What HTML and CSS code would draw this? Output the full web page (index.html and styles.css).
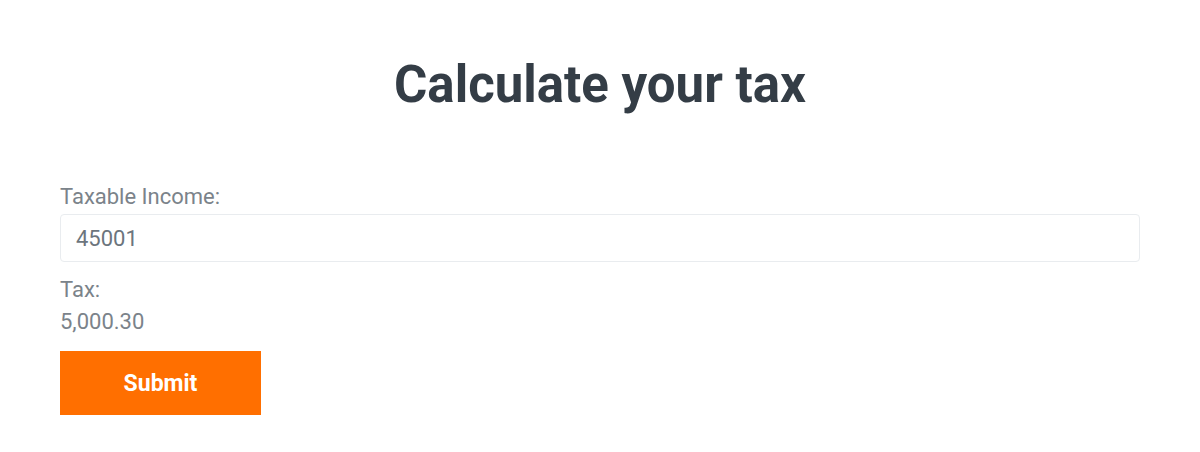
FILE: index.html
```html
<!DOCTYPE html>
<html lang="en">
<head>
    <meta charset="UTF-8" />
    <title>Calculate your tax</title>
    <link rel="stylesheet" href="styles.css">
</head>
<body>
    <main class="calculator">
        <h1 class="title">Calculate your tax</h1>
        <form class="tax-form">
            <label class="field-label" for="income">Taxable Income:</label>
            <input class="field-input" type="text" id="income" value="45001" />
            <div class="field-label">Tax:</div>
            <div class="result">5,000.30</div>
            <button class="submit" type="submit">Submit</button>
        </form>
    </main>
</body>
</html>
```

FILE: styles.css
```css
body {
    margin: 0;
    font-family: Roboto, "Liberation Sans", sans-serif;
    background: #fff;
    color: #6c757d;
}
.calculator {
    padding: 0 60px;
}
.title {
    margin: 0;
    padding-top: 54px;
    text-align: center;
    font-size: 51px;
    font-weight: 700;
    line-height: 62px;
    color: #343d46;
}
.tax-form {
    margin-top: 67px;
    display: flex;
    flex-direction: column;
    align-items: flex-start;
}
.field-label {
    font-size: 22px;
    line-height: 28px;
    color: #7b838a;
}
.field-input {
    box-sizing: border-box;
    width: 100%;
    height: 48px;
    margin-top: 3px;
    margin-bottom: 14px;
    padding: 0 15px;
    border: 1px solid #e9ecef;
    border-radius: 4px;
    font-family: inherit;
    font-size: 22px;
    color: #6c757d;
    outline: none;
}
.result {
    font-size: 22px;
    line-height: 36px;
    color: #7b838a;
}
.submit {
    margin-top: 11px;
    width: 201px;
    height: 64px;
    border: none;
    background: #ff6f00;
    color: #fff;
    font-family: inherit;
    font-size: 23px;
    font-weight: 700;
    cursor: pointer;
}
```
